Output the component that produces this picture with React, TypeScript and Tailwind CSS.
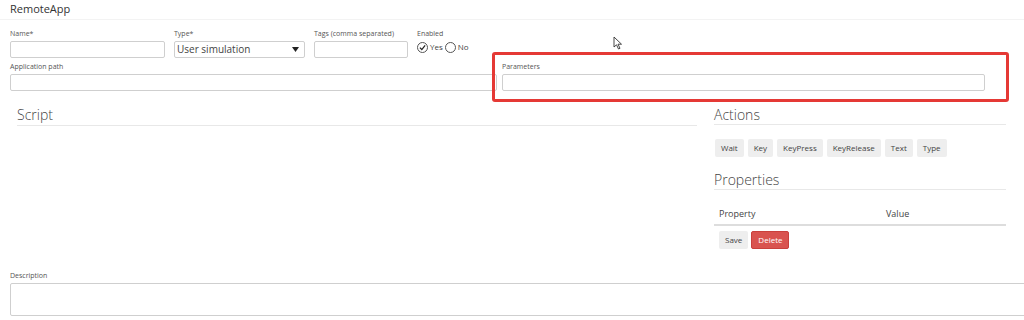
import React from 'react'

const font = { fontFamily: '"Open Sans", "Liberation Sans", sans-serif' }

function Label({ children }: { children: React.ReactNode }) {
  return <div className="text-[7px] leading-[9px] text-[#555] mb-[3px]">{children}</div>
}

function Input({ className = '' }: { className?: string }) {
  return <div className={`h-[17px] border border-[#cfcfcf] rounded-[2px] bg-white ${className}`} />
}

function Radio({ checked, label }: { checked?: boolean; label: string }) {
  return (
    <span className="flex items-center gap-[2px]">
      <span className="w-[11px] h-[11px] rounded-full border border-[#555] flex items-center justify-center">
        {checked && (
          <svg width="7" height="7" viewBox="0 0 8 8">
            <path d="M1 4.2 L3.2 6.3 L7 1.5" fill="none" stroke="#222" strokeWidth="1.4" />
          </svg>
        )}
      </span>
      <span className="text-[8px] text-[#444]">{label}</span>
    </span>
  )
}

const actions = ['Wait', 'Key', 'KeyPress', 'KeyRelease', 'Text', 'Type']

export default function App() {
  return (
    <div className="relative w-[1024px] h-[320px] overflow-hidden bg-white" style={font}>
      <div className="h-[20px] px-[10px] pt-[1px] border-b border-[#f3f3f3] text-[11px] text-[#333]">RemoteApp</div>

      <div className="px-[10px] pt-[9px] flex gap-[9px]">
        <div className="w-[155px]">
          <Label>Name*</Label>
          <Input />
        </div>
        <div className="w-[131px]">
          <Label>Type*</Label>
          <div className="h-[17px] border border-[#cfcfcf] rounded-[2px] flex items-center justify-between px-[2px]">
            <span className="text-[10px] text-[#444]">User simulation</span>
            <svg width="7" height="5" viewBox="0 0 7 5" className="mr-[3px]">
              <path d="M0 0 H7 L3.5 5 Z" fill="#222" />
            </svg>
          </div>
        </div>
        <div className="w-[94px]">
          <Label>Tags (comma separated)</Label>
          <Input />
        </div>
        <div>
          <Label>Enabled</Label>
          <div className="flex gap-[2px]">
            <Radio checked label="Yes" />
            <Radio label="No" />
          </div>
        </div>
      </div>

      <div className="px-[10px] pt-[4px] flex gap-[5px]">
        <div className="w-[487px]">
          <Label>Application path</Label>
          <Input />
        </div>
        <div className="w-[483px]">
          <Label>Parameters</Label>
          <Input />
        </div>
      </div>

      <div className="flex pt-[16px]">
        <div className="ml-[17px] w-[680px]">
          <div className="text-[14px] leading-[16px] text-[#444] font-light pb-[2px] border-b border-[#e8e8e8]">Script</div>
        </div>
        <div className="ml-[17px] w-[292px]">
          <div className="text-[14px] leading-[16px] text-[#444] font-light pb-[1px] border-b border-[#e8e8e8]">Actions</div>
          <div className="flex gap-[4px] mt-[14px] ml-[1px]">
            {actions.map((a) => (
              <div key={a} className="h-[18px] px-[6px] flex items-center bg-[#eeeeee] rounded-[2px] text-[8px] text-[#444]">
                {a}
              </div>
            ))}
          </div>
          <div className="mt-[15px] text-[14px] leading-[16px] text-[#444] font-light pb-[1px] border-b border-[#e8e8e8]">Properties</div>
          <div className="mt-[17px] flex text-[9px] text-[#444] pb-[3px] border-b-2 border-[#dddddd]">
            <span className="ml-[5px] w-[167px]">Property</span>
            <span>Value</span>
          </div>
          <div className="flex gap-[3px] mt-[5px] ml-[5px]">
            <div className="h-[18px] px-[6px] flex items-center bg-[#eeeeee] rounded-[2px] text-[8px] text-[#444]">Save</div>
            <div className="h-[18px] px-[6px] flex items-center bg-[#d9534f] border border-[#c9403c] rounded-[2px] text-[8px] text-white">Delete</div>
          </div>
        </div>
      </div>

      <div className="absolute left-[10px] top-[271px] w-[1030px]">
        <Label>Description</Label>
        <div className="h-[33px] border border-[#cfcfcf] rounded-[2px]" />
      </div>

      <div className="absolute left-[492px] top-[52px] w-[517px] h-[50px] border-[3px] border-[#e53935] rounded-[3px]" />

      <svg className="absolute left-[613px] top-[36px]" width="10" height="14" viewBox="0 0 10 14">
        <path d="M1 1 V11 L3.5 8.8 L5.5 13 L7 12.3 L5 8.2 H8.5 Z" fill="white" stroke="#333" strokeWidth="0.9" />
      </svg>
    </div>
  )
}
